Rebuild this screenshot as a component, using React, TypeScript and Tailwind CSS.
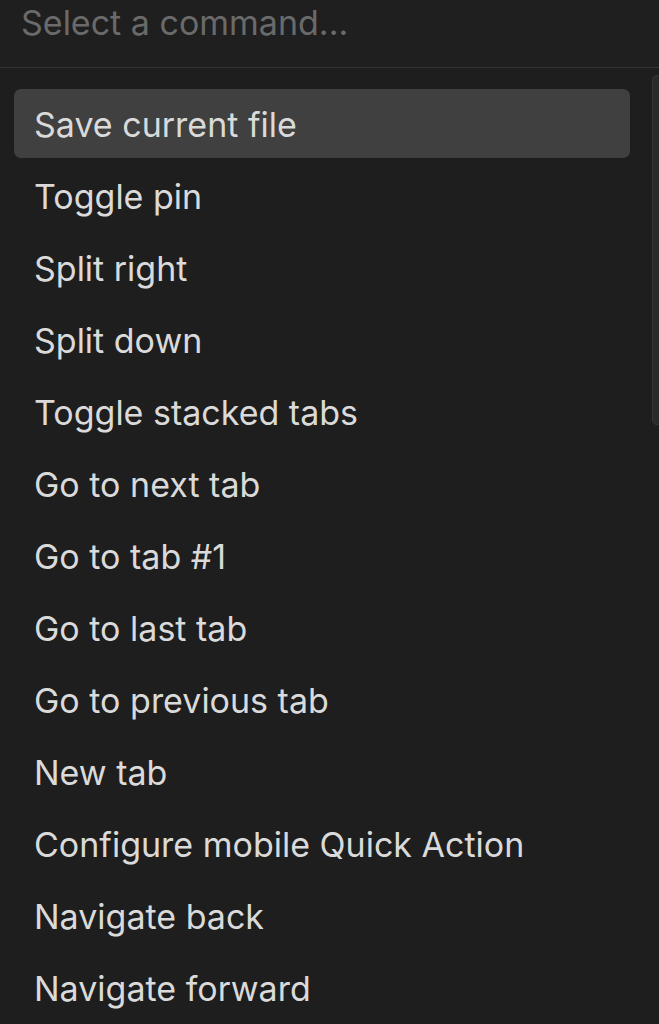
import React from "react";

const items = [
  "Save current file",
  "Toggle pin",
  "Split right",
  "Split down",
  "Toggle stacked tabs",
  "Go to next tab",
  "Go to tab #1",
  "Go to last tab",
  "Go to previous tab",
  "New tab",
  "Configure mobile Quick Action",
  "Navigate back",
  "Navigate forward",
];

export default function App() {
  return (
    <div
      className="w-[659px] h-[1024px] overflow-hidden bg-[#1e1e1e] relative"
      style={{ fontFamily: "Inter, 'Noto Sans', sans-serif" }}
    >
      <div className="h-[68px] border-b border-[#333333] bg-[#1f1f1f] flex items-start pl-[21px]">
        <div className="text-[34px] leading-[46px] text-[#6a6a6a]">
          Select a command...
        </div>
      </div>
      <div className="flex flex-col gap-[3px] pt-[21px] pl-[14px] pr-[29px]">
        {items.map((t, i) => (
          <div
            key={t}
            className={`h-[69px] flex items-center pl-[20px] pt-[2px] rounded-[7px] text-[34px] text-[#dadada] ${
              i === 0 ? "bg-[#404040]" : ""
            }`}
          >
            {t}
          </div>
        ))}
      </div>
      <div className="absolute left-[652px] top-[75px] w-[10px] h-[350px] rounded-[5px] bg-[#2a2a2a] border border-[#363636]" />
    </div>
  );
}
